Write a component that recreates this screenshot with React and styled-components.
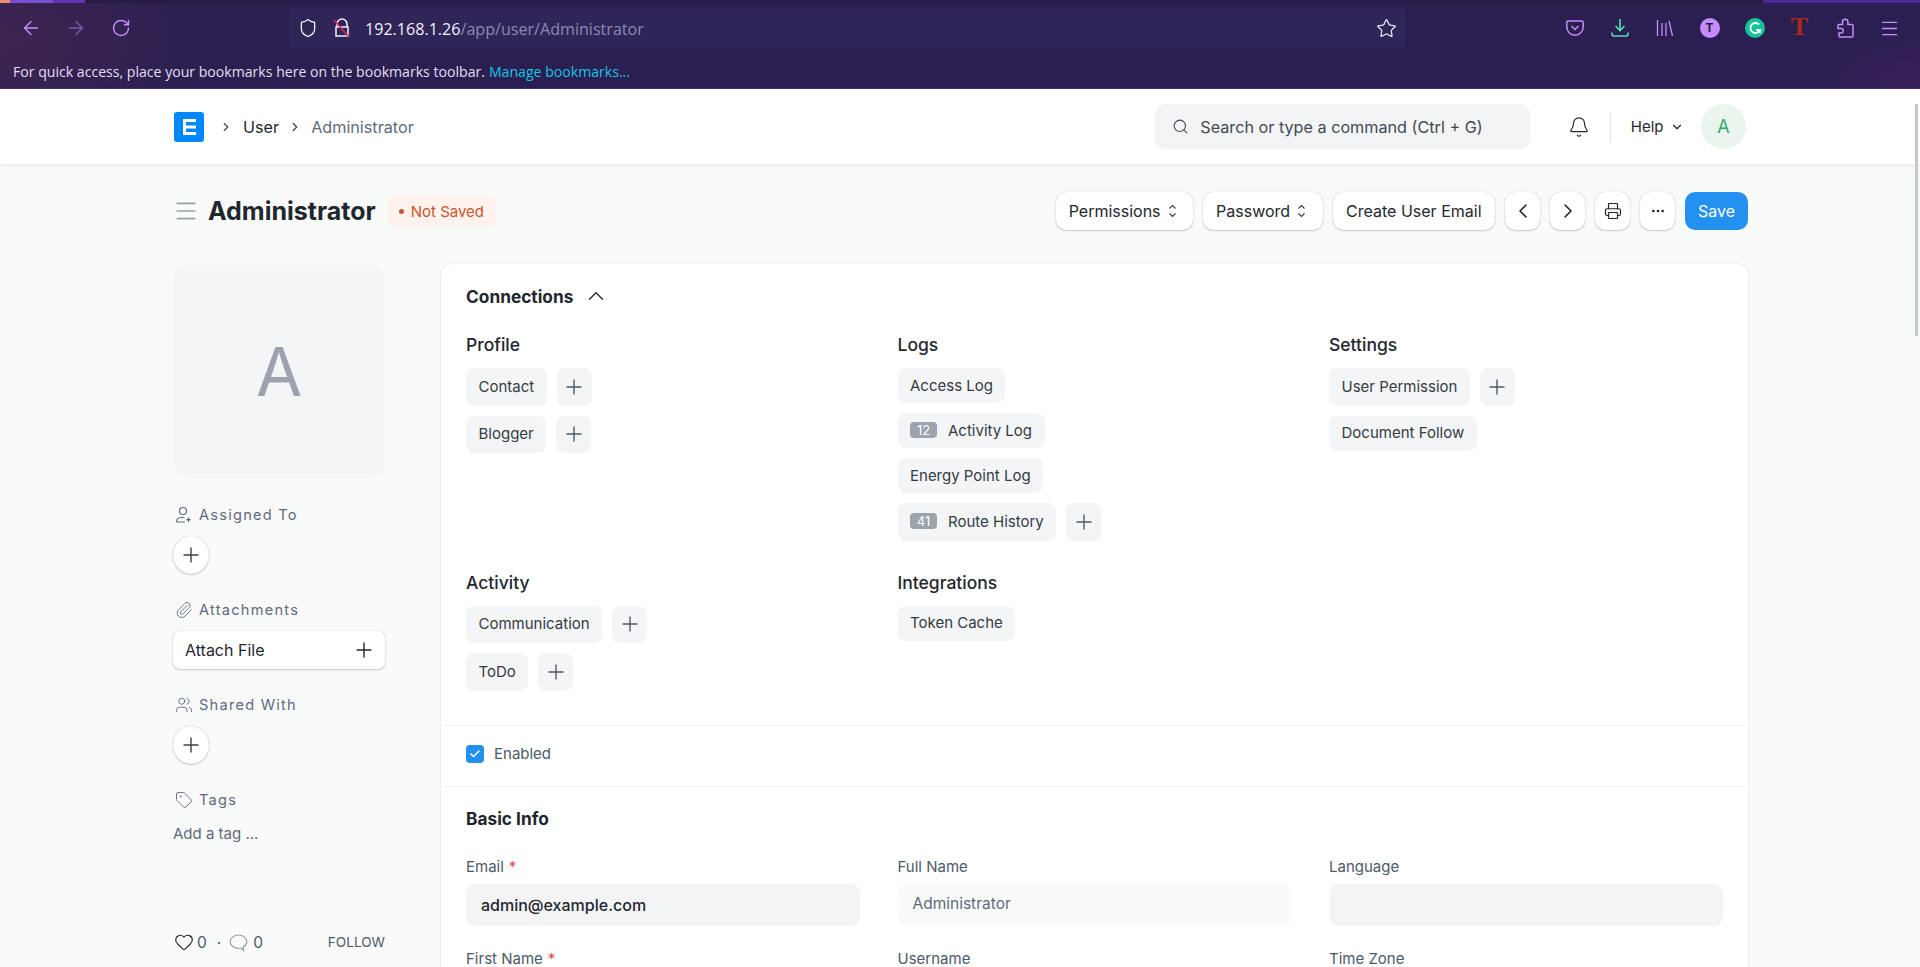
import React from 'react';
import styled, { createGlobalStyle } from 'styled-components';
import {
  ArrowLeft,
  ArrowRight,
  Bell,
  Check,
  ChevronDown,
  ChevronLeft,
  ChevronRight,
  ChevronUp,
  Ellipsis,
  Heart,
  Menu,
  Paperclip,
  Plus,
  Printer,
  RotateCw,
  Search,
  Shield,
  Star,
  Tag,
  Users,
} from 'lucide-react';

const GlobalStyle = createGlobalStyle`
  html, body {
    margin: 0;
    height: 100%;
    overflow: hidden;
    background: #f9fafa;
  }
  body {
    font-family: Inter, "Liberation Sans", sans-serif;
    color: #1f272e;
  }
  * { box-sizing: border-box; }
`;

const Page = styled.div`
  position: relative;
  height: 967px;
  overflow: hidden;
`;

const ScrollThumb = styled.div`
  position: absolute;
  top: 104px;
  right: 2px;
  width: 3px;
  height: 232px;
  background: #c3c8cd;
`;

/* browser chrome */
const Chrome = styled.div`
  height: 89px;
  background: radial-gradient(ellipse 200px 110px at 0 40px, #3f2552 0%, rgba(63, 37, 82, 0) 100%),
    radial-gradient(ellipse 110px 60px at 1920px 88px, #3a2159 0%, rgba(58, 33, 89, 0) 100%), #2b1f51;
  border-bottom: 1px solid #3e2f78;
  font-family: "Open Sans", "Liberation Sans", sans-serif;
`;

const TabStrip = styled.div`
  display: flex;
  height: 3px;
  background: #271a45;
`;

const TabSegment = styled.div`
  width: ${props => props.w}px;
  margin-left: ${props => props.gap || 0}px;
  background: ${props => props.color};
`;

const Toolbar = styled.div`
  display: flex;
  align-items: flex-start;
  height: 53px;
  padding: 5px 8px 0 8px;
`;

const ToolButton = styled.div`
  display: flex;
  align-items: center;
  justify-content: center;
  width: 45px;
  height: 40px;
  color: ${props => props.color || '#c58cff'};
  opacity: ${props => (props.disabled ? 0.5 : 1)};
`;

const UrlBar = styled.div`
  display: flex;
  align-items: center;
  width: 1117px;
  height: 40px;
  margin-left: 146px;
  padding: 0 9px 0 9px;
  background: #2f2558;
  border-radius: 4px;
  color: #fbfbfe;
`;

const UrlLock = styled.svg`
  margin-left: 15px;
  margin-right: 13px;
`;

const UrlHost = styled.span`
  margin-top: 2px;
  font-size: 16.1px;
  color: #f2f0fa;
`;

const UrlPath = styled.span`
  margin-top: 2px;
  font-size: 16.1px;
  color: #8f88ad;
`;

const UrlStar = styled.div`
  display: flex;
  margin-left: auto;
  color: #e4e0f2;
`;

const ToolCluster = styled.div`
  display: flex;
  margin-left: auto;
`;

const RoundBadge = styled.span`
  display: flex;
  align-items: center;
  justify-content: center;
  width: 20px;
  height: 20px;
  border-radius: 50%;
  background: #c58cff;
  color: #241a40;
  font-family: "Liberation Sans", sans-serif;
  font-size: 12px;
  font-weight: 700;
`;

const RedT = styled.span`
  font-family: "Liberation Serif", serif;
  font-size: 26px;
  font-weight: 700;
  line-height: 1;
  margin-top: -2px;
  color: #a82c1c;
`;

const BookmarkBar = styled.div`
  display: flex;
  align-items: center;
  height: 32px;
  padding: 0 0 2px 13px;
  font-size: 14.1px;
  color: #e4def2;
`;

const BookmarkLink = styled.span`
  margin-left: 4px;
  color: #15c5e6;
`;

/* frappe navbar */
const Navbar = styled.div`
  display: flex;
  align-items: center;
  height: 75px;
  padding: 0 174px 0 174px;
  background: #fff;
  box-shadow: 0 1px 3px rgba(25, 39, 52, 0.1);
`;

const Crumbs = styled.div`
  display: flex;
  align-items: center;
  margin-left: 15px;
  font-size: 16.2px;
  color: #1f272e;
`;

const CrumbCurrent = styled.span`
  color: #5f6b7a;
`;

const CrumbSep = styled.span`
  display: flex;
  margin: ${props => (props.first ? '0 10px 0 0' : '0 9px 0 9px')};
  color: #3a444e;
`;

const SearchBox = styled.div`
  display: flex;
  align-items: center;
  gap: 11px;
  width: 375px;
  height: 45px;
  margin-left: auto;
  padding-left: 17px;
  background: #f3f4f6;
  border-radius: 10px;
  font-size: 16.2px;
  color: #3f4a55;
`;

const BellWrap = styled.div`
  display: flex;
  margin-left: 38px;
  color: #1f272e;
`;

const NavDivider = styled.div`
  width: 1px;
  height: 30px;
  margin-left: 20px;
  background: #dfe2e5;
`;

const HelpMenu = styled.div`
  display: flex;
  align-items: center;
  gap: 6px;
  margin-left: 19.5px;
  font-size: 15px;
  color: #1f272e;
`;

const Avatar = styled.div`
  display: flex;
  align-items: center;
  justify-content: center;
  width: 45px;
  height: 45px;
  margin-left: 17.5px;
  border-radius: 50%;
  background: #eaf5ee;
  color: #30a66d;
  font-size: 18px;
`;

/* page body */
const Container = styled.div`
  padding: 28px 172px 0 174px;
`;

const PageHead = styled.div`
  display: flex;
  align-items: center;
  height: 38px;
`;

const MenuIcon = styled.div`
  display: flex;
  margin-left: -1.5px;
  color: #98a1a9;
`;

const Title = styled.h1`
  margin: 0 0 0 9.5px;
  font-size: 25px;
  font-weight: 700;
  color: #1f272e;
`;

const StatusBadge = styled.div`
  display: flex;
  align-items: center;
  gap: 7px;
  height: 30px;
  margin-left: 11px;
  padding: 0 13px 0 12px;
  background: #fff2ec;
  border-radius: 7px;
  font-size: 15px;
  color: #c9572c;
`;

const StatusDot = styled.span`
  width: 5px;
  height: 5px;
  border-radius: 50%;
  background: #c9572c;
`;

const HeadActions = styled.div`
  display: flex;
  gap: 10px;
  margin-left: auto;
`;

const ActionButton = styled.button`
  display: flex;
  align-items: center;
  justify-content: center;
  gap: 7px;
  width: ${props => (props.w ? `${props.w}px` : 'auto')};
  height: 38px;
  padding: ${props => {
    if (props.w) return '0';
    return props.select ? '0 16.5px 0 13px' : '0 13.5px';
  }};
  background: ${props => (props.primary ? '#2490ef' : '#fff')};
  border: 0;
  border-radius: 10px;
  box-shadow: ${props =>
    props.primary ? 'none' : '0 0 1px rgba(25, 39, 52, 0.3), 0 1px 2px rgba(25, 39, 52, 0.2)'};
  font-family: inherit;
  font-size: 16px;
  color: ${props => (props.primary ? '#fff' : '#1f272e')};
`;

const Layout = styled.div`
  display: flex;
  gap: 57px;
  margin-top: 34px;
`;

const Sidebar = styled.aside`
  flex: none;
  width: 210px;
`;

const ProfileImage = styled.div`
  display: flex;
  align-items: center;
  justify-content: center;
  height: 213px;
  margin-top: 1px;
  background: #f4f5f6;
  border-radius: 14px;
  font-size: 67px;
  color: #9ca3af;
`;

const SideSection = styled.section`
  margin-top: ${props => (props.first ? 27 : 26)}px;
`;

const SideLabel = styled.div`
  display: flex;
  align-items: center;
  gap: 6px;
  height: 20px;
  padding-left: 1px;
  font-size: 14.6px;
  font-weight: 400;
  letter-spacing: 0.085em;
  color: #5f6b7a;
`;

const CircleButton = styled.div`
  display: flex;
  align-items: center;
  justify-content: center;
  width: 36px;
  height: 38px;
  margin: 11px 0 0 -1px;
  background: #fff;
  border-radius: 50%;
  box-shadow: 0 0 1px rgba(25, 39, 52, 0.35), 0 1px 2px rgba(25, 39, 52, 0.2);
  color: #3a444e;
`;

const AttachButton = styled.div`
  display: flex;
  align-items: center;
  justify-content: space-between;
  height: 38px;
  margin: 11px -1px 0;
  padding: 0 9px 0 12px;
  background: #fff;
  border-radius: 7px;
  box-shadow: 0 0 1px rgba(25, 39, 52, 0.35), 0 1px 2px rgba(25, 39, 52, 0.2);
  font-size: 16px;
  color: #1f272e;
`;

const AddTag = styled.div`
  height: 20px;
  margin: 14px 0 0 -1px;
  font-size: 15px;
  line-height: 20px;
  color: #5f6b7a;
`;

const SideFooter = styled.div`
  display: flex;
  align-items: center;
  height: 20px;
  margin: 88px -1px 0 0;
  font-size: 15.5px;
  color: #4c5a67;
`;

const FooterCount = styled.span`
  display: flex;
  margin-left: ${props => props.gap}px;
`;

const FollowLink = styled.span`
  margin-left: auto;
  font-size: 13.6px;
  color: #4c5a67;
`;

const Card = styled.main`
  flex: 1;
  min-width: 0;
  background: #fff;
  border-radius: 10px;
  box-shadow: 0 0 1px rgba(25, 39, 52, 0.2), 0 1px 3px rgba(25, 39, 52, 0.08);
`;

const CardSection = styled.section`
  padding: ${props => props.pad || '22px 25px 0'};
  border-bottom: ${props => (props.divider ? '1px solid #f2f3f4' : '0')};
`;

const SectionTitle = styled.h2`
  display: flex;
  align-items: center;
  gap: 9.5px;
  height: 20px;
  margin: 0;
  font-size: 17.3px;
  font-weight: 700;
  color: #1f272e;
`;

const ConnectionGrid = styled.div`
  display: grid;
  grid-template-columns: repeat(3, 394px);
  column-gap: 37.5px;
  row-gap: 32px;
  margin-top: 29px;
`;

const GroupTitle = styled.div`
  height: 20px;
  margin-bottom: 13px;
  font-size: 17.5px;
  font-weight: 500;
  line-height: 20px;
  color: #1f272e;
`;

const ChipList = styled.div`
  display: flex;
  flex-direction: column;
  gap: 10px;
`;

const ChipRow = styled.div`
  display: flex;
  gap: 10px;
  height: ${props => (props.tall ? 37.5 : 35)}px;
`;

const Chip = styled.div`
  display: flex;
  align-items: center;
  padding: 0 12.5px 1px;
  background: #f4f5f6;
  border-radius: 8px;
  font-size: 15px;
  color: #333c44;
`;

const ChipCount = styled.span`
  display: flex;
  align-items: center;
  justify-content: center;
  width: 27px;
  height: 16px;
  margin-right: 11px;
  background: #9ca3af;
  border-radius: 4px;
  font-size: 13px;
  color: #fff;
`;

const ChipAdd = styled.div`
  display: flex;
  align-items: center;
  justify-content: center;
  width: 35px;
  background: #f4f5f6;
  border-radius: 8px;
  color: #4c5a67;
`;

const CheckRow = styled.div`
  display: flex;
  align-items: center;
  gap: 10px;
  height: 60px;
  padding-bottom: 4px;
  font-size: 15px;
  color: #4c5a67;
`;

const CheckBox = styled.span`
  display: flex;
  align-items: center;
  justify-content: center;
  width: 18px;
  height: 18px;
  background: #2490ef;
  border-radius: 4px;
  color: #fff;
`;

const FormGrid = styled.div`
  display: grid;
  grid-template-columns: repeat(3, 394px);
  column-gap: 37.5px;
  row-gap: 23px;
  margin-top: 28px;
`;

const FieldLabel = styled.label`
  display: block;
  height: 20px;
  margin-bottom: 7px;
  font-size: 15px;
  line-height: 20px;
  color: #4c5a67;
`;

const Required = styled.span`
  margin-left: 5px;
  color: #e24c4c;
`;

const FieldInput = styled.div`
  display: flex;
  align-items: center;
  height: 42px;
  padding: ${props => (props.readOnly ? '0 15px 3px' : '0 15px')};
  background: ${props => (props.readOnly ? '#f9fafa' : '#f3f4f6')};
  border-radius: 9px;
  font-size: ${props => (props.readOnly ? 15.5 : 16)}px;
  font-weight: ${props => (props.readOnly ? 400 : 500)};
  color: ${props => (props.readOnly ? '#5f6b7a' : '#1f272e')};
`;

const connectionGroups = [
  {
    title: 'Profile',
    items: [
      { label: 'Contact', add: true },
      { label: 'Blogger', add: true },
    ],
  },
  {
    title: 'Logs',
    items: [
      { label: 'Access Log' },
      { label: 'Activity Log', count: 12 },
      { label: 'Energy Point Log' },
      { label: 'Route History', count: 41, add: true },
    ],
  },
  {
    title: 'Settings',
    items: [{ label: 'User Permission', add: true }, { label: 'Document Follow' }],
  },
  {
    title: 'Activity',
    items: [
      { label: 'Communication', add: true },
      { label: 'ToDo', add: true },
    ],
  },
  { title: 'Integrations', items: [{ label: 'Token Cache' }] },
];

const fields = [
  { label: 'Email', required: true, value: 'admin@example.com' },
  { label: 'Full Name', value: 'Administrator', readOnly: true },
  { label: 'Language', value: '' },
  { label: 'First Name', required: true, value: '' },
  { label: 'Username', value: '' },
  { label: 'Time Zone', value: '' },
];

const Logo = () => (
  <svg width="30" height="30" viewBox="0 0 30 30">
    <rect width="30" height="30" rx="3" fill="#0089ff" />
    <rect x="9" y="7" width="13" height="3" fill="#fff" />
    <rect x="9" y="13.5" width="13" height="3" fill="#fff" />
    <rect x="9" y="20" width="13" height="3" fill="#fff" />
    <rect x="9" y="10" width="3" height="10" fill="#fff" />
  </svg>
);

const SelectArrows = () => (
  <svg width="9" height="14" viewBox="0 0 9 14" fill="none" stroke="#333c44" strokeWidth="1.1">
    <path d="M1.5 4.5 4.5 1.5l3 3M1.5 9.5l3 3 3-3" />
  </svg>
);

const Pocket = () => (
  <svg width="20" height="20" viewBox="0 0 20 20" fill="none" stroke="currentColor" strokeWidth="1.5">
    <path d="M3 3h14a1.2 1.2 0 0 1 1.2 1.2V9a8.2 8.2 0 0 1-16.4 0V4.2A1.2 1.2 0 0 1 3 3Z" />
    <path d="m6.5 8 3.5 3.5L13.5 8" />
  </svg>
);

const Download = () => (
  <svg width="20" height="20" viewBox="0 0 20 20" fill="none" stroke="currentColor" strokeWidth="1.6">
    <path d="M10 1v11.5M5.5 8l4.5 4.5L14.5 8M2 14.5v2A1.5 1.5 0 0 0 3.5 18h13a1.5 1.5 0 0 0 1.5-1.5v-2" />
  </svg>
);

const Library = () => (
  <svg width="20" height="20" viewBox="0 0 20 20" fill="none" stroke="currentColor" strokeWidth="1.3">
    <path d="M2.5 2v16M7 5v13M11 5v13M14 3l3.5 15" />
  </svg>
);

const Grammarly = () => (
  <svg width="20" height="20" viewBox="0 0 20 20" fill="none">
    <circle cx="10" cy="10" r="10" fill="#15c39a" />
    <path d="M14 6.5a5 5 0 1 0 1 5.500H11" stroke="#fff" strokeWidth="1.8" />
    <path d="M15.5 11l-.5 3.500-2.500-1.500" stroke="#fff" strokeWidth="1.4" />
  </svg>
);

const PuzzlePiece = () => (
  <svg width="20" height="20" viewBox="0 0 20 20" fill="none" stroke="currentColor" strokeWidth="1.5">
    <path d="M7.5 6.5V4a2.7 2.7 0 0 1 5.4 0v2.5H17a1 1 0 0 1 1 1V18a1 1 0 0 1-1 1H5a1 1 0 0 1-1-1v-3h2a2.2 2.2 0 0 0 0-4.500H3V7.500a1 1 0 0 1 1-1Z" />
  </svg>
);

const AssignIcon = () => (
  <svg width="18" height="18" viewBox="0 0 18 18" fill="none" stroke="currentColor" strokeWidth="1.2">
    <circle cx="8" cy="5" r="3.5" />
    <path d="M1.5 16v-.5c0-2.500 2.500-4 5-4h3M1.500 16h8.500M13.500 11.500v4.500M11.300 13.700h4.400" />
  </svg>
);

const CommentBubble = () => (
  <svg width="19" height="19" viewBox="0 0 19 19" fill="none" stroke="#98a1a9" strokeWidth="1.2">
    <path d="M9.5 2C5 2 1.2 4.800 1.200 8.700s3.800 6.700 8.300 6.700c1 0 2-.1 2.900-.4l2.100 2.500v-3.700c2-1.200 3.300-3 3.300-5.100C17.800 4.800 14 2 9.500 2Z" />
  </svg>
);

const AddPlus = () => <Plus size={24} strokeWidth={1.4} />;

const App = () => (
  <Page>
    <GlobalStyle />
    <Chrome>
      <TabStrip>
        <TabSegment w={10} color="#f08a6a" />
        <TabSegment w={43} color="#7a4fd0" />
        <TabSegment w={32} color="#5f34b0" />
        <TabSegment w={157} gap={1678} color="#4a2a9a" />
      </TabStrip>
      <Toolbar>
        <ToolButton>
          <ArrowLeft size={22} strokeWidth={1.5} />
        </ToolButton>
        <ToolButton disabled>
          <ArrowRight size={22} strokeWidth={1.5} />
        </ToolButton>
        <ToolButton>
          <RotateCw size={20} strokeWidth={1.7} />
        </ToolButton>
        <UrlBar>
          <Shield size={20} strokeWidth={1.5} />
          <UrlLock width="19" height="20" viewBox="0 0 19 20" fill="none">
            <path d="M4 9V6a5 5 0 0 1 10 0v3M3 9h12v9H3Z" stroke="#f2f0fa" strokeWidth="1.5" />
            <path d="M1 2l15 17" stroke="#e0245e" strokeWidth="1.5" />
          </UrlLock>
          <UrlHost>192.168.1.26</UrlHost>
          <UrlPath>/app/user/Administrator</UrlPath>
          <UrlStar>
            <Star size={21} strokeWidth={1.5} />
          </UrlStar>
        </UrlBar>
        <ToolCluster>
          <ToolButton>
            <Pocket />
          </ToolButton>
          <ToolButton color="#4de3b0">
            <Download />
          </ToolButton>
          <ToolButton>
            <Library />
          </ToolButton>
          <ToolButton>
            <RoundBadge>T</RoundBadge>
          </ToolButton>
          <ToolButton>
            <Grammarly />
          </ToolButton>
          <ToolButton>
            <RedT>T</RedT>
          </ToolButton>
          <ToolButton>
            <PuzzlePiece />
          </ToolButton>
          <ToolButton>
            <Menu size={21} strokeWidth={1.5} />
          </ToolButton>
        </ToolCluster>
      </Toolbar>
      <BookmarkBar>
        For quick access, place your bookmarks here on the bookmarks toolbar.
        <BookmarkLink>Manage bookmarks...</BookmarkLink>
      </BookmarkBar>
    </Chrome>

    <Navbar>
      <Logo />
      <Crumbs>
        <CrumbSep first>
          <ChevronRight size={14} />
        </CrumbSep>
        User
        <CrumbSep>
          <ChevronRight size={14} />
        </CrumbSep>
        <CrumbCurrent>Administrator</CrumbCurrent>
      </Crumbs>
      <SearchBox>
        <Search size={17} strokeWidth={1.5} />
        Search or type a command (Ctrl + G)
      </SearchBox>
      <BellWrap>
        <Bell size={22} strokeWidth={1.3} />
      </BellWrap>
      <NavDivider />
      <HelpMenu>
        Help
        <ChevronDown size={14} />
      </HelpMenu>
      <Avatar>A</Avatar>
    </Navbar>

    <Container>
      <PageHead>
        <MenuIcon>
          <Menu size={26} strokeWidth={1.6} />
        </MenuIcon>
        <Title>Administrator</Title>
        <StatusBadge>
          <StatusDot />
          Not Saved
        </StatusBadge>
        <HeadActions>
          <ActionButton select>
            Permissions
            <SelectArrows />
          </ActionButton>
          <ActionButton select>
            Password
            <SelectArrows />
          </ActionButton>
          <ActionButton>Create User Email</ActionButton>
          <ActionButton w={35}>
            <ChevronLeft size={24} strokeWidth={1.6} />
          </ActionButton>
          <ActionButton w={35}>
            <ChevronRight size={24} strokeWidth={1.6} />
          </ActionButton>
          <ActionButton w={35}>
            <Printer size={18} strokeWidth={1.6} />
          </ActionButton>
          <ActionButton w={35}>
            <Ellipsis size={16} />
          </ActionButton>
          <ActionButton primary w={63}>
            Save
          </ActionButton>
        </HeadActions>
      </PageHead>

      <Layout>
        <Sidebar>
          <ProfileImage>A</ProfileImage>
          <SideSection first>
            <SideLabel>
              <AssignIcon />
              Assigned To
            </SideLabel>
            <CircleButton>
              <AddPlus />
            </CircleButton>
          </SideSection>
          <SideSection>
            <SideLabel>
              <Paperclip size={18} strokeWidth={1.2} />
              Attachments
            </SideLabel>
            <AttachButton>
              Attach File
              <AddPlus />
            </AttachButton>
          </SideSection>
          <SideSection>
            <SideLabel>
              <Users size={18} strokeWidth={1.2} />
              Shared With
            </SideLabel>
            <CircleButton>
              <AddPlus />
            </CircleButton>
          </SideSection>
          <SideSection>
            <SideLabel>
              <Tag size={18} strokeWidth={1.2} />
              Tags
            </SideLabel>
            <AddTag>Add a tag ...</AddTag>
          </SideSection>
          <SideFooter>
            <Heart size={20} strokeWidth={1.3} color="#1f272e" />
            <FooterCount gap={3}>0</FooterCount>
            <FooterCount gap={10}>·</FooterCount>
            <FooterCount gap={8}>
              <CommentBubble />
            </FooterCount>
            <FooterCount gap={5}>0</FooterCount>
            <FollowLink>FOLLOW</FollowLink>
          </SideFooter>
        </Sidebar>

        <Card>
          <CardSection pad="22px 25px 34px" divider>
            <SectionTitle>
              Connections
              <ChevronUp size={26} strokeWidth={1.2} />
            </SectionTitle>
            <ConnectionGrid>
              {connectionGroups.map(group => (
                <div key={group.title}>
                  <GroupTitle>{group.title}</GroupTitle>
                  <ChipList>
                    {group.items.map(item => (
                      <ChipRow key={item.label} tall={item.add}>
                        <Chip>
                          {item.count && <ChipCount>{item.count}</ChipCount>}
                          {item.label}
                        </Chip>
                        {item.add && (
                          <ChipAdd>
                            <AddPlus />
                          </ChipAdd>
                        )}
                      </ChipRow>
                    ))}
                  </ChipList>
                </div>
              ))}
            </ConnectionGrid>
          </CardSection>
          <CardSection pad="0 25px" divider>
            <CheckRow>
              <CheckBox>
                <Check size={12} strokeWidth={3} />
              </CheckBox>
              Enabled
            </CheckRow>
          </CardSection>
          <CardSection>
            <SectionTitle>Basic Info</SectionTitle>
            <FormGrid>
              {fields.map(field => (
                <div key={field.label}>
                  <FieldLabel>
                    {field.label}
                    {field.required && <Required>*</Required>}
                  </FieldLabel>
                  <FieldInput readOnly={field.readOnly}>{field.value}</FieldInput>
                </div>
              ))}
            </FormGrid>
          </CardSection>
        </Card>
      </Layout>
    </Container>
    <ScrollThumb />
  </Page>
);

export default App;
